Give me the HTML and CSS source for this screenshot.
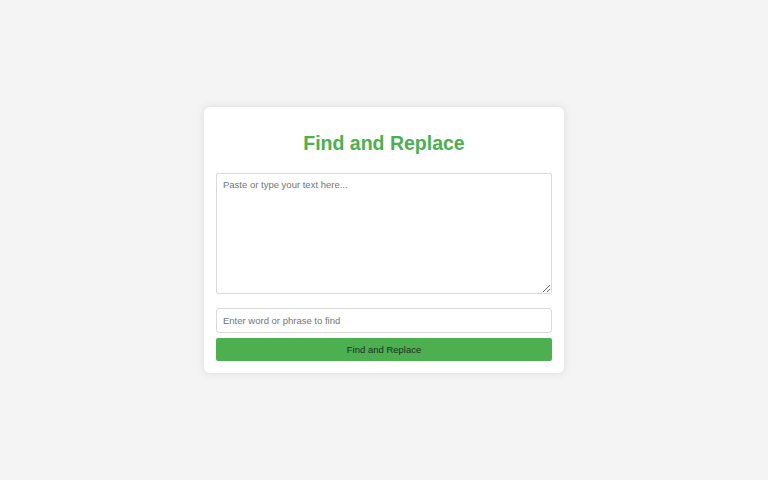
FILE: index.html
```html
<!DOCTYPE html>
<html lang="en">

<head>
    <meta charset="UTF-8">
    <meta name="viewport" content="width=device-width, initial-scale=1.0">
    <title>Find and Replace</title>
    <link rel="stylesheet" href="styles.css">
</head>

<body>
    <div class="container">
        <h2>Find and Replace</h2>
        <textarea id="text-input" placeholder="Paste or type your text here..."></textarea>
        <input type="text" id="find-input" placeholder="Enter word or phrase to find">
        <button type="button">Find and Replace</button>
    </div>
</body>

</html>
```

FILE: styles.css
```css
body {
    font-family: "Liberation Sans", Arial, sans-serif;
    background-color: #f4f4f4;
    margin: 0;
    padding: 0;
    display: flex;
    justify-content: center;
    align-items: center;
    height: 100vh;
}

.container {
    background-color: #ffffff;
    padding: 12px;
    border-radius: 6px;
    box-shadow: 0 0 8px rgba(0, 0, 0, 0.1);
    width: 336px;
    display: flex;
    flex-direction: column;
}

h2 {
    text-align: center;
    color: #4caf50;
    font-size: 19.5px;
    margin: 12px 0 18px;
    line-height: 24px;
}

textarea {
    width: 100%;
    height: 121px;
    padding: 5px 6px;
    border: 1px solid #dadada;
    border-radius: 2px;
    box-sizing: border-box;
    font-family: inherit;
    font-size: 9.5px;
    resize: vertical;
    margin: 0 0 14px;
}

input[type="text"] {
    width: 100%;
    height: 25px;
    padding: 0 6px;
    border: 1px solid #dadada;
    border-radius: 3px;
    box-sizing: border-box;
    font-family: inherit;
    font-size: 9.5px;
    margin: 0 0 5px;
}

textarea::placeholder,
input::placeholder {
    color: #757575;
}

button {
    width: 100%;
    height: 23px;
    padding: 0;
    border: none;
    border-radius: 2px;
    background-color: #4caf50;
    color: #1f2f1f;
    font-family: inherit;
    font-size: 9.5px;
    cursor: pointer;
}

button:hover {
    background-color: #45a049;
}
```
